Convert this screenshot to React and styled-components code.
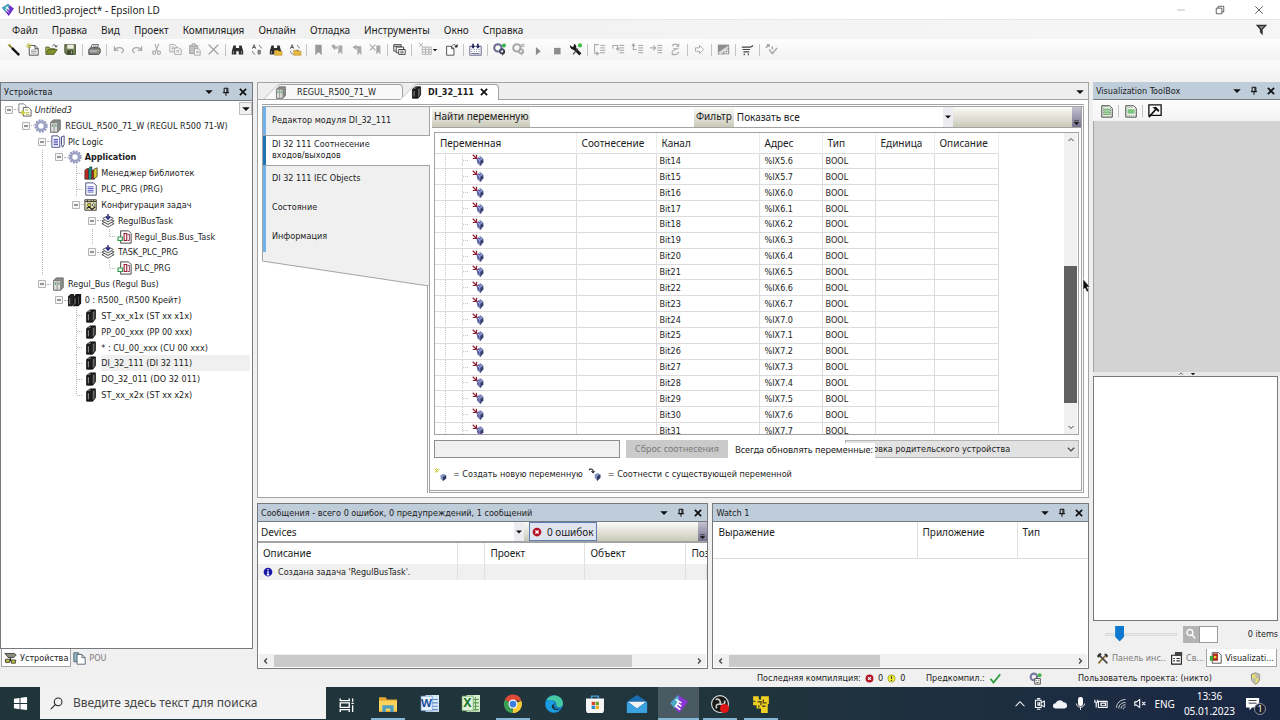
import React from 'react'
import styled, { createGlobalStyle, css } from 'styled-components'

const fonts = {
  ui: '"Noto Sans", "Open Sans", sans-serif',
  small: '"DejaVu Sans Condensed", "DejaVu Sans", sans-serif',
}

const colors = {
  chrome: '#f0f0f0',
  header: '#bfccda',
  border: '#a3a3a3',
  dark: '#76797d',
  grid: '#dcdcdc',
  text: '#1c1c1c',
  muted: '#7d7d7d',
  thumb: '#cacaca',
}

const GlobalStyle = createGlobalStyle`
  * {
    box-sizing: border-box;
  }

  body {
    margin: 0;
    background: ${colors.chrome};
    color: ${colors.text};
    font-family: ${fonts.ui};
    font-size: 10px;
    line-height: 14px;
  }

  button, input, select {
    margin: 0;
    padding: 0;
    border: 0;
    border-radius: 0;
    background: none;
    color: inherit;
    font: inherit;
  }

  ul {
    list-style: none;
    margin: 0;
    padding: 0;
  }

  a {
    color: inherit;
    text-decoration: none;
  }
`

/* ---------- icons ---------- */

const Svg = styled.svg`
  display: block;
  flex: none;
  width: ${({ $size }) => $size || 14}px;
  height: ${({ $size }) => $size || 14}px;
  overflow: visible;
`

const G = '#a9a9a9'

const lines = (x, w, ys, color) =>
  ys.map(y => <path key={y} d={`M${x} ${y}h${w}`} stroke={color} />)

const cabinet = (
  <g>
    <path d="M3 4l3-3h8v11l-3 3H3z" fill="#8c8f8c" stroke="#666" />
    <path d="M3 4h8v11H3z" fill="#dde0dd" stroke="#777" />
    <path d="M7 4v11" stroke="#888" />
    <path d="M5 6v3M9 6v3" stroke="#3f8f52" />
  </g>
)

const moduleShape = (
  <g>
    <path d="M3 4l4-3h6v10l-3 4H3z" fill="#1b1b1b" stroke="#111" />
    <path d="M10 4v10l2-3V2z" fill="#6d6d6d" />
    <path d="M5 6v7" stroke="#a8a8a8" />
    <path d="M5 3l3-1" stroke="#999" />
  </g>
)

const gear = (
  <g>
    <circle cx="8" cy="8" r="6.6" fill="none" stroke="#8f94b8" strokeWidth="2" strokeDasharray="2.2 1.25" />
    <circle cx="8" cy="8" r="4.6" fill="none" stroke="#9ba0c6" strokeWidth="3" />
  </g>
)

const binoculars = (
  <g fill="#2d2d2d">
    <path d="M3 3h3v3h4V3h3l2 7v4H9.500v-4h-3v4H1v-4z" />
    <path d="M3 10v3M13 10v3" stroke="#aaa" />
  </g>
)

const refs = (
  <g fill="none" stroke="#3d3d3d">
    <path d="M3 7l2-5 2 5M3.500 5.500h3" />
    <path d="M11 3l2 1 1 3M3 10l1 3 3 1" strokeDasharray="2 1" />
    <path d="M10 9h2.500v4.500H10zM10 11h3" />
  </g>
)

const folder = <path d="M7 9h4l1 1h4v5H7z" fill="#e8b83c" stroke="#a97c16" strokeWidth=".6" />

const target = (
  <g>
    <path d="M3 15V1h9l3 3v11z" fill="#fff" stroke="#333" />
    <path d="M0 8h5v4H0z" fill="#fff" stroke="#2e9e4c" strokeWidth="1.300" />
    <path d="M7 4h3v8H7z" fill="#fff" stroke="#a11c33" strokeWidth="1.300" />
    <path d="M11 5h2v7h-2" fill="none" stroke="#7c2a4a" />
  </g>
)

const steps = <g stroke={G} strokeWidth="1.300">{[3, 6, 9, 12].map(y => <path key={y} d={`M9 ${y}h6`} />)}</g>

const icons = {
  logo: (
    <g>
      <path d="M0 5l8-5 8 6-7 10-4-5z" fill="#6b35c9" />
      <path d="M0 5l8-5 2 3-5 8z" fill="#39a9b8" />
      <path d="M5 4l4 2M8 3L5 8l4 3M7 6l3 2" fill="none" stroke="#fff" strokeWidth="1.300" />
    </g>
  ),
  wand: (
    <g>
      <path d="M6 6l9 9" stroke="#151515" strokeWidth="3" />
      <path d="M2 2l4 4" stroke="#77751f" strokeWidth="2" />
      <path d="M1 4l1-1M4 1v1M1 1l1 1" stroke="#d2c63b" />
    </g>
  ),
  newFile: (
    <g>
      <path d="M4 3h7l4 4v8H4z" fill="#fff" stroke="#333" />
      <path d="M11 3v4h4" fill="none" stroke="#333" />
      {lines(6, 7, [8.5, 10.5, 12.5], '#8b8b8b')}
      <path d="M3.500 0v7M0 3.500h7M1 1l5 5M6 1L1 6" stroke="#bdb93a" />
    </g>
  ),
  open: (
    <g>
      <path d="M1 13V5h4l1 2h6v2" fill="#a4b05a" stroke="#4e5a20" />
      <path d="M1 14l3-6h11l-4 6z" fill="#7f8f2e" stroke="#4e5a20" />
      <path d="M9 4c2-3 4-2 5 1m0 0l1-2m-1 2l-2-1" fill="none" stroke="#333" />
    </g>
  ),
  save: (
    <g>
      <path d="M1 2h13v12H3l-2-2z" fill="#76845a" stroke="#333f1c" />
      <path d="M4 2h8v5H4z" fill="#eceddf" />
      <path d="M4 9h7v5H4z" fill="#3d4427" />
      <path d="M9 10v3" stroke="#ddd" />
    </g>
  ),
  print: (
    <g>
      <path d="M5 2h8l-2 5H3z" fill="#fff" stroke="#444" />
      <path d="M6 4h5M5.500 5.500h5" stroke="#777" />
      <path d="M1 8l2-2h11l1 2v4l-2 2H1z" fill="#8d8d8d" stroke="#333" />
      <path d="M2 10h9" stroke="#ddd" />
      <circle cx="13" cy="9" r=".8" fill="#d6d23b" />
    </g>
  ),
  undo: <path d="M3 4v5h5M3 9c2-4 10-5 11 0 0 2-1 3-3 3" fill="none" stroke={G} strokeWidth="1.400" />,
  redo: <path d="M13 4v5H8M13 9C11 5 3 4 2 9c0 2 1 3 3 3" fill="none" stroke={G} strokeWidth="1.400" />,
  cut: (
    <g fill="none" stroke={G} strokeWidth="1.300">
      <path d="M6 1l3 9M11 1L7 10" />
      <circle cx="5" cy="12" r="2" />
      <circle cx="11" cy="12" r="2" />
    </g>
  ),
  copy: (
    <g fill="#fff" stroke="#999">
      <path d="M1 2h6l2 2v7H1z" />
      <path d="M3 5h4M3 7h4M3 9h2" />
      <path d="M7 6h5l3 2v6H7z" />
      <path d="M9 9h4M9 11h4" />
    </g>
  ),
  paste: (
    <g stroke="#999">
      <path d="M2 3h10v10H2z" fill="#c3c3c3" />
      <path d="M5 1h4v3H5z" fill="#ddd" />
      <path d="M8 7h5l2 2v6H8z" fill="#fff" />
      <path d="M10 10h4M10 12h4" />
    </g>
  ),
  remove: <path d="M2 2l12 12M14 2L2 14" stroke="#989898" strokeWidth="1.600" />,
  find: binoculars,
  replace: refs,
  findIn: <g>{binoculars}{folder}</g>,
  replaceIn: <g>{refs}{folder}</g>,
  bookmark: <path d="M4 2h8v13l-4-4-4 4z" fill="#9a9a9a" />,
  bookmarkNext: <g fill={G}><path d="M9 3h5v11l-2.500-3L9 14z" /><path d="M1 2l4 0v2h3v3H5v2L1 5z" /></g>,
  bookmarkPrev: <g fill={G}><path d="M9 4h5v11l-2.500-3L9 15z" /><path d="M8 2L3 5l5 4V6h3V4H8z" /></g>,
  bookmarkClear: <g fill={G}><path d="M9 3h5v11l-2.500-3L9 14z" /><path d="M1 2l7 7M8 2L1 9" stroke={G} strokeWidth="1.500" /></g>,
  windows: (
    <g fill="#fff" stroke="#444" strokeWidth="1.200">
      <path d="M1 2h9v8H1z" />
      <path d="M1 4h9" />
      <path d="M4 5h9v7H4z" />
      <path d="M7 8h8v6H7z" />
      <path d="M9 10h4M9 12h4" strokeWidth="1" />
    </g>
  ),
  gridNew: (
    <g fill="none" stroke={G}>
      <path d="M4 5h11v9H4zM4 8h11M4 11h11M8 5v9M12 5v9" />
      <path d="M0 0l5 5M5 0L0 5" />
    </g>
  ),
  share: (
    <g fill="#fff" stroke="#333">
      <path d="M2 4h6l3 3v8H2z" />
      <path d="M8 4v3h3M9 3c2-2 4-1 5 1" fill="none" />
      <path d="M15 2v3h-3z" fill="#222" />
    </g>
  ),
  build: (
    <g>
      <path d="M1 4h14v11H1z" fill="#fff" stroke="#45456f" />
      <path d="M3 8h1m2 0h1m2 0h1m2 0h1M3 10.500h1m2 0h1m2 0h1m2 0h1M3 13h10" stroke="#45456f" />
      <path d="M5 1v4M11 1v4" stroke="#22225a" strokeWidth="2" />
      <path d="M2.500 4h5L5 7zM8.500 4h5L11 7z" fill="#22225a" />
    </g>
  ),
  login: (
    <g>
      <circle cx="6" cy="6" r="4.500" fill="none" stroke="#6a6f92" strokeWidth="2.600" />
      <circle cx="11" cy="10" r="2.500" fill="none" stroke="#444866" strokeWidth="2" />
      <circle cx="13.500" cy="3" r="2.500" fill="#36b44a" />
      <path d="M14 9v3l-3 3" stroke="#333" strokeWidth="1.500" fill="none" />
    </g>
  ),
  logout: (
    <g fill="none" stroke={G}>
      <circle cx="6" cy="6" r="4.500" strokeWidth="2.600" />
      <circle cx="11" cy="10" r="2.500" strokeWidth="2" />
      <path d="M11 1l4 4M15 1l-4 4M14 9v3l-3 3" strokeWidth="1.300" />
    </g>
  ),
  play: <path d="M6 5l6 5-6 5z" fill="#8b8b8b" />,
  stop: <path d="M5 6h8v8H5z" fill="#8b8b8b" />,
  wrench: (
    <g>
      <path d="M6 6l8 8" stroke="#1d1d1d" strokeWidth="3.500" />
      <path d="M2 3l2 2 2-1V1C9 2 10 5 8 8 5 9 1 7 1 3z" fill="#1d1d1d" />
      <path d="M11 7l-6 7" stroke="#444" strokeWidth="1.500" />
      <circle cx="13.500" cy="3" r="2.600" fill="#3fbf45" />
    </g>
  ),
  stepOver: <g>{steps}<path d="M7 2H2v11h4M4 11l3 2-3 2" fill="none" stroke={G} strokeWidth="1.300" /></g>,
  stepInto: <g>{steps}<path d="M1 7V3h6v5M5 6l2 3 2-3" fill="none" stroke={G} strokeWidth="1.300" /></g>,
  stepOut: <g>{steps}<path d="M2 8h5M3 8V2M1 4l2-3 2 3" fill="none" stroke={G} strokeWidth="1.300" /></g>,
  runTo: <g>{steps}<path d="M0 6h6M4 3l3 3-3 3" fill="none" stroke={G} strokeWidth="1.300" /></g>,
  cycle: <path d="M4 4c2-4 6-3 8 0M9 4h3V1M12 6L4 10M4 10v4h3M12 11c-1 3-4 4-8 3M5 7h6" fill="none" stroke={G} strokeWidth="1.300" />,
  arrow: <path d="M3 6h5V3l5 5-5 5v-3H3z" fill="#fff" stroke="#999" />,
  wave: (
    <g>
      <path d="M1 2h14v12H1z" fill="#8c8c8c" />
      <path d="M1 12L14 3v3L5 14z" fill="#d9d9d9" />
      <path d="M9 9h5M9 12h5M10 8v6M13 8v6" stroke="#eee" />
    </g>
  ),
  trace: <path d="M1 5h11M2 8h9M3 11h7M12 5l3-2M4 13v2M9 13v2" fill="none" stroke="#444" strokeWidth="1.400" />,
  check2: <path d="M1 6l4-4M2 2h3v3M5 8l4 5 6-7M9 4v4" fill="none" stroke={G} strokeWidth="1.800" />,
  funnel: <g><path d="M1 2h14L9.500 8v7L6 11.500V8z" fill="#333" /><path d="M5 4h6L8 7z" fill="#999" /></g>,
  project: (
    <g>
      <path d="M1 1h6l2 2v8H1z" fill="#fff" stroke="#777" />
      <path d="M6 5h6l3 3v7H6z" fill="#fff" stroke="#555" />
      <path d="M4 8l5 3-5 3z" fill="#d4d234" />
      <path d="M8 8h4M9 11h4M9 13h4" stroke="#b0b02f" />
    </g>
  ),
  cabinet,
  module: moduleShape,
  gear,
  logic: (
    <g>
      <path d="M1 1h7l2 2v11H1z" fill="#fff" stroke="#39397f" />
      {lines(3, 5, [5, 7, 9, 11], '#2b2bb0')}
      <path d="M12 2v9l1 3 2-3V1z" fill="#fff" stroke="#39397f" />
    </g>
  ),
  library: (
    <g stroke="#2a2a2a" strokeWidth=".8">
      <path d="M1 5l2-2h2v12H1z" fill="#c92a1c" />
      <path d="M5 3l2-2h2v14H5z" fill="#1f8f84" />
      <path d="M9 5h3v10H9z" fill="#e2241a" />
      <path d="M11 4l4-2v10l-4 3z" fill="#d8cf2c" />
    </g>
  ),
  pou: (
    <g>
      <path d="M2 1h9l3 3v11H2z" fill="#fff" stroke="#333a66" />
      {lines(4, 7, [5.5, 7.5, 9.5, 11.5], '#4343c4')}
    </g>
  ),
  tasks: (
    <g>
      <path d="M1 2h13v12H1z" fill="#e8e4b0" stroke="#333" />
      <path d="M1 4h13M4 2v3M8 2v3M11 2v3" stroke="#333" />
      <circle cx="6" cy="8" r="2" fill="#d7cf2e" stroke="#555" />
      <circle cx="11" cy="8" r="1.500" fill="#fff" stroke="#555" />
      <path d="M3 12l3-2 3 3 4-3" fill="none" stroke="#222" strokeWidth="1.400" />
    </g>
  ),
  task: (
    <g>
      <path d="M1 11l7-3 7 3-7 4z" fill="#fff" stroke="#444" />
      <path d="M1 8l7-3 7 3-7 4z" fill="#e4e4ea" stroke="#444" />
      <path d="M2 5l6-3 6 3-6 4z" fill="#f7f7ff" stroke="#555" />
      <path d="M8 0v5M5.500 3L8 6l2.500-3" fill="none" stroke="#27277e" strokeWidth="1.500" />
    </g>
  ),
  target,
  rack: (
    <g>
      <path d="M0 4l3-3h4v11l-2 3H0z" fill="#222" />
      <path d="M6 5l3-4h6v11l-3 3H6z" fill="#151515" />
      <path d="M2 6v7M8 6v7" stroke="#999" />
      <path d="M12 4v9" stroke="#555" />
    </g>
  ),
  unmapped: (
    <g>
      <path d="M6 6l5-3 4 3v5l-4 5-4-4z" fill="#6468a8" />
      <path d="M8 7l3 2v5M11 9l3-3M9 4l4 3" stroke="#c5c8e8" fill="none" />
      <path d="M11 9l4-2v4l-4 5z" fill="#393c70" />
      <path d="M1 1l5 5M6 1v5H1" stroke="#8f1d2b" fill="none" strokeWidth="1.600" />
    </g>
  ),
  newVar: (
    <g>
      <path d="M8 9l4-2 3 2v4l-4 3-3-3z" fill="#7e93c4" />
      <path d="M11 11l4-2v4l-4 3z" fill="#32375f" />
      <path d="M1 1l4 4M5 1L1 5M3 0v6M7 1l-2 3" stroke="#c8c63b" />
    </g>
  ),
  mapVar: (
    <g>
      <path d="M7 8l4-2 3 2v4l-4 4-3-4z" fill="#7e93c4" />
      <path d="M10 10l4-2v4l-4 4z" fill="#32375f" />
      <path d="M0 3c1-3 4-2 5 0v3M3 4l2 2 2-2" stroke="#222" fill="none" strokeWidth="1.300" />
    </g>
  ),
  docGreen: (
    <g>
      <path d="M2 2h9l3 3v10H2z" fill="#eef3ec" stroke="#333" />
      <path d="M4 5h8v8H4z" fill="#cfe6cd" />
      {lines(4, 8, [6, 8, 10, 12], '#64a864')}
      <path d="M4 3h6M4 5v8M12 5v8" stroke="#7a8f78" strokeDasharray="1 1" />
    </g>
  ),
  docAdd: (
    <g>
      <path d="M2 2h9l3 3v10H2z" fill="#eef3ec" stroke="#333" />
      <path d="M4 6h8v5H4z" fill="#7cc47c" />
      <path d="M4 4h5M4 13h8" stroke="#8b9a8b" strokeDasharray="1 1" />
    </g>
  ),
  hammer: (
    <g>
      <path d="M1 1h14v12H1z" fill="#fff" stroke="#111" strokeWidth="1.500" />
      <path d="M1 15L9 6" stroke="#111" strokeWidth="2" />
      <path d="M5 4l4-1 4 4-1 2-4-3z" fill="#111" />
    </g>
  ),
  info: <g><circle cx="8" cy="8" r="7" fill="#1717a8" /><path d="M8 3v2M8 6.500v6M6 12.500h4" stroke="#fff" strokeWidth="2" /></g>,
  error: <g><circle cx="8" cy="8" r="7" fill="#b51426" /><path d="M5.500 5.500l5 5M10.500 5.500l-5 5" stroke="#fff" strokeWidth="2.200" /></g>,
  warn: <g><circle cx="8" cy="8" r="6.500" fill="#f1ee3a" stroke="#777a1c" /><path d="M8 4v5M8 10.500v2" stroke="#333" strokeWidth="2" /></g>,
  ok: <path d="M2 9l4 5 9-11" fill="none" stroke="#2f9b3e" strokeWidth="2.500" />,
  devices: (
    <g>
      <path d="M1 3h12l2 2-3 3H5z" fill="#8d8d7d" stroke="#333" />
      <path d="M1 12h14M8 8v4" stroke="#333" strokeWidth="1.500" />
      <path d="M2 10h5v4H2zM9 11h5v4H9z" fill="#c4c23b" stroke="#333" />
    </g>
  ),
  pages: (
    <g stroke="#456">
      <path d="M1 1h6v11H1z" fill="#8fb8c0" />
      <path d="M5 3h6l4 4v8H5z" fill="#fff" />
      <path d="M11 3v4h4" fill="none" />
    </g>
  ),
  tools: (
    <g>
      <path d="M3 14L12 4" stroke="#8a6a2a" strokeWidth="2" />
      <path d="M3 3l11 11" stroke="#444" strokeWidth="2" />
      <path d="M1 5l4-4 2 2-4 4zM10 2h3l2 3-2 2z" fill="#333" />
    </g>
  ),
  props: (
    <g>
      <path d="M2 4h12v11H2z" fill="#fff" stroke="#222" strokeWidth="1.400" />
      <path d="M6 0h9v5H6z" fill="#444" />
      <path d="M4 8h2M4 11h2M8 8h4M8 11h4" stroke="#222" strokeWidth="1.500" />
    </g>
  ),
  visu: (
    <g>
      <path d="M4 2h8l3 3v10H4z" fill="#fff" stroke="#333" />
      <path d="M1 6h5v6H1z" fill="#3aa640" />
      <path d="M5 3h6v9H5z" fill="#b02318" />
      <path d="M6 6h3v3H6z" fill="#e3d935" />
    </g>
  ),
  online: (
    <g>
      <circle cx="6" cy="6" r="4" fill="none" stroke="#777a9c" strokeWidth="2.500" />
      <circle cx="13" cy="4" r="2.500" fill="#43b549" />
      <path d="M7 8h7v7H7z" fill="#eee" stroke="#444" />
      <path d="M9 10v1M12 10v1M9 13h3" stroke="#444" />
    </g>
  ),
  shield: (
    <g>
      <path d="M8 1l5 2v5c0 4-3 6-5 7-2-1-5-3-5-7V3z" fill="#e8dc7a" stroke="#666" />
      <path d="M8 1l5 2v5H8zM3 8h5v7c-2-1-5-3-5-7z" fill="#b9bcae" />
    </g>
  ),
  magnifier: <g fill="none" stroke="#fff" strokeWidth="1.800"><circle cx="6.500" cy="6" r="4" /><path d="M9.500 9l4 5" /></g>,
  down: <path d="M2 5h12l-6 6z" fill="#111" />,
  pin: <path d="M5 2h6v7H5zM9.500 2v7M3 9h10M8 9v5" fill="none" stroke="#111" strokeWidth="1.600" />,
  close: <path d="M3 3l10 10M13 3L3 13" stroke="#111" strokeWidth="2.800" />,
  overflow: <path d="M3 4h10M3 8h10l-5 5z" fill="#111" stroke="#111" strokeWidth="1.500" />,
  up: <path d="M3 10l5-5 5 5" fill="none" stroke="#444" strokeWidth="2" />,
  downThin: <path d="M3 6l5 5 5-5" fill="none" stroke="#444" strokeWidth="2" />,
  left: <path d="M10 3L5 8l5 5" fill="none" stroke="#444" strokeWidth="2.600" />,
  right: <path d="M6 3l5 5-5 5" fill="none" stroke="#444" strokeWidth="2.600" />,
  minimize: <path d="M2 8h12" stroke="#999" />,
  maximize: <path d="M2 5h9v9H2zM5 5V2h9v9h-3" fill="none" stroke="#444" strokeWidth="1.300" />,
  exit: <path d="M2 2l12 12M14 2L2 14" stroke="#444" strokeWidth="1.300" />,
  minus: <g><path d="M1 1h14v14H1z" fill="#f6f6f6" stroke="#b4b4b4" strokeWidth="2" /><path d="M4 8h8" stroke="#333" strokeWidth="2" /></g>,
}

/* taskbar pictures */
const apps = {
  start: <g fill="#fff"><path d="M1 3l6-1v5.500H1zM8 1.900L15 1v6.500H8zM1 8.500h6V14l-6-1zM8 8.500h7V15l-7-1z" /></g>,
  search: <g fill="none" stroke="#222" strokeWidth="1.300"><circle cx="10" cy="6" r="4.700" /><path d="M6.500 9.500L1 15" /></g>,
  taskView: <path d="M2 3v2h8V3M2 7h8v4H2zM2 15v-2h8v2M13 3v3M13 9v6M12 7.500h2" fill="none" stroke="#fff" strokeWidth="1.200" />,
  explorer: (
    <g>
      <path d="M0 2h6l1 2h9v11H0z" fill="#e2a832" />
      <path d="M0 5h16v9H0z" fill="#fbd35c" />
      <path d="M3 15V9h10v6h-3v-3H6v3z" fill="#4c9fc4" />
    </g>
  ),
  word: (
    <g>
      <path d="M4 0h12v15H4z" fill="#d9e8f7" />
      <path d="M10 4h5M10 7h5M10 10h5M8 13h7" stroke="#5b87bf" />
      <path d="M0 1h10v13H0z" fill="#eaf2fb" stroke="#5b8ccc" strokeWidth=".6" />
      <text x="0" y="11" fontSize="10" fontWeight="700" fill="#1d4f9c">W</text>
    </g>
  ),
  excel: (
    <g>
      <path d="M4 0h12v15H4z" fill="#d6ebd0" />
      <path d="M9 4h6M9 7h6M9 10h6M8 13h7M12 2v12" stroke="#5aa052" />
      <path d="M0 1h10v13H0z" fill="#e2f2dc" stroke="#5aa052" strokeWidth=".6" />
      <text x="1" y="11" fontSize="11" fontWeight="700" fill="#217a32">X</text>
    </g>
  ),
  chrome: (
    <g>
      <path d="M8 8L.6 4.500A8 8 0 0 1 15.500 5H8z" fill="#df4a38" />
      <path d="M8 8L15.400 5A8 8 0 0 1 7.500 16z" fill="#f6ca38" />
      <path d="M8 8L7.500 16A8 8 0 0 1 .8 4.200z" fill="#3a9f52" />
      <circle cx="8" cy="8" r="4" fill="#fff" />
      <circle cx="8" cy="8" r="3" fill="#3c7de0" />
    </g>
  ),
  edge: (
    <g>
      <circle cx="8" cy="8" r="8" fill="#1779c4" />
      <path d="M1 5C4-2 16-1 16 8c0 3-5 4-6 1 1-5-7-5-9-4z" fill="#45c9a0" />
      <path d="M1 6c5-3 8-1 7 2-3 2-1 6 5 6C6 18-1 13 1 6z" fill="#1b9de0" />
      <path d="M8 8c-1 4 3 6 7 4-2 2-9 2-9-2 0-1 1-2 2-2z" fill="#20343a" />
    </g>
  ),
  store: (
    <g>
      <path d="M5 3V1h6v2" fill="none" stroke="#4ba3dc" strokeWidth="1.300" />
      <path d="M0 3h16v11l-1 2H1l-1-2z" fill="#f5f5f5" />
      <path d="M5 6h3v3H5z" fill="#d9482b" />
      <path d="M8.500 6h3v3h-3z" fill="#6ea52c" />
      <path d="M5 9.500h3v3H5z" fill="#2c8fd6" />
      <path d="M8.500 9.500h3v3h-3z" fill="#e8b024" />
    </g>
  ),
  mail: (
    <g>
      <path d="M-1 6l9-6 9 6v9H-1z" fill="#1c6cb0" />
      <path d="M0 6h16l-8 6z" fill="#f2f2f2" />
      <path d="M-1 6l9 6 9-6v10H-1z" fill="#3ba2e2" />
    </g>
  ),
  epsilon: (
    <g>
      <path d="M8 0l9 6-8 10-8-9z" fill="#8a35d6" />
      <path d="M8 0L1 7l4 5 4-8z" fill="#4aa9c4" />
      <path d="M6 4l5 3M9 5L6 10l4 3M8 8l3 2" fill="none" stroke="#fff" strokeWidth="1.500" />
    </g>
  ),
  obs: (
    <g>
      <circle cx="8" cy="8" r="7.500" fill="#161616" stroke="#ddd" />
      <path d="M4 4c3-1 5 1 4 4M12 5c1 3-1 4-4 3M5 12c-1-3 0-4 3-4" fill="none" stroke="#ccc" strokeWidth="1.500" />
      <circle cx="12" cy="12" r="4" fill="#e01616" />
    </g>
  ),
  yellow: (
    <g>
      <path d="M1 1h5v3h2V1h7v7h-1v8H8v-4H4V9H1V6h2V5H1z" fill="#efd022" />
      <path d="M5 6h3v3M10 4v3h3M9 10h3M6 9v2" stroke="#4f4710" fill="none" strokeWidth="1.200" />
    </g>
  ),
  chevron: <path d="M2 11l6-6 6 6" fill="none" stroke="#fff" strokeWidth="1.400" />,
  meet: <path d="M3 4h7v9H3zM10 7l4-2v7l-4-2M5 2h4M5 15h4M6 7h2v3H6z" fill="none" stroke="#fff" strokeWidth="1.300" />,
  cloud: <path d="M3 13a3 3 0 0 1 0-6 5 5 0 0 1 9-1 3.500 3.500 0 0 1 1 7z" fill="#f2f5f8" />,
  mic: <g><rect x="5" y="0" width="6" height="11" rx="2.500" fill="#fff" /><path d="M3 8c0 6 10 6 10 0M8 12v4" fill="none" stroke="#fff" /></g>,
  battery: <path d="M5 5h10v7H5zM1 3v3h3V3M2.500 6v6M8 7h5v3H8z" fill="none" stroke="#fff" strokeWidth="1.300" />,
  wifi: <path d="M2 13C2 7 7 2 14 2M5 14c0-5 4-8 9-8M8 14c0-3 3-5 6-5M11 15c0-2 1-3 3-3" fill="none" stroke="#ddd" strokeWidth="1.200" />,
  mute: <path d="M1 6h2l4-3v10l-4-3H1zM10 6l4 4M14 6l-4 4" fill="none" stroke="#fff" strokeWidth="1.300" />,
  note: <g><path d="M0 1h15v11H7l-3 3v-3H0z" fill="#fff" /><path d="M3 4h9M3 7h9" stroke="#223" /></g>,
}

const Icon = ({ name, size }) => (
  <Svg viewBox="0 0 16 16" $size={size} aria-hidden="true">
    {icons[name] || apps[name]}
  </Svg>
)

/* ---------- window frame ---------- */

const Page = styled.div`
  display: flex;
  flex-direction: column;
  height: 100vh;
  overflow: hidden;
`

const TitleBar = styled.header`
  display: flex;
  align-items: center;
  gap: 4px;
  height: 19px;
  padding: 0 16px 0 2px;
  background: #fff;
`

const WindowTitle = styled.h1`
  flex: 1;
  margin: 0;
  font-size: 10px;
  font-weight: 400;
`

const WindowButtons = styled.div`
  display: flex;
  gap: 29px;
`

const MenuBar = styled.nav`
  display: flex;
  align-items: center;
  gap: 14px;
  height: 20px;
  padding: 0 12px;
  border-top: 1px solid #e6e6e6;
  background: linear-gradient(90deg, #f0f0f0, #f6f6f6);

  a:last-child {
    margin-left: auto;
  }
`

const ToolBar = styled.div`
  display: flex;
  align-items: center;
  height: 21px;
  padding-left: 4px;
  background: linear-gradient(#fdfdfd, #f3f3f3);
`

const ToolButton = styled.button`
  display: flex;
  align-items: center;
  justify-content: center;
  width: ${({ $wide }) => ($wide ? 28 : 19)}px;
  height: 20px;
`

const ToolSep = styled.span`
  width: 1px;
  height: 12px;
  margin: 0 2px;
  background: #c4c4c4;
`

const EmptyBar = styled.div`
  height: 22px;
  background: linear-gradient(#fbfbfb, #f1f1f1);
`

const Workspace = styled.main`
  flex: 1;
  display: grid;
  grid-template-columns: 253px minmax(0, 1fr) 187px;
  column-gap: 4px;
  min-height: 0;
`

const Column = styled.div`
  display: flex;
  flex-direction: column;
  min-width: 0;
  min-height: 0;
`

/* ---------- docked panels ---------- */

const Panel = styled.section`
  display: flex;
  flex-direction: column;
  flex: 1;
  min-width: 0;
  min-height: 0;
  border: 1px solid ${colors.dark};
  background: #fff;
`

const PanelHeader = styled.header`
  display: flex;
  align-items: center;
  gap: 7px;
  flex: none;
  height: 18px;
  padding: 0 4px 0 3px;
  border-bottom: 1px solid ${colors.dark};
  background: ${colors.header};
  font-family: ${fonts.small};
  font-size: 9px;

  h2 {
    flex: 1;
    margin: 0;
    font: inherit;
    white-space: nowrap;
  }
`

const IconButton = styled.button`
  display: flex;
`

const PanelTop = ({ title }) => (
  <PanelHeader>
    <h2>{title}</h2>
    <IconButton aria-label="Меню"><Icon name="down" size={10} /></IconButton>
    <IconButton aria-label="Закрепить"><Icon name="pin" size={10} /></IconButton>
    <IconButton aria-label="Закрыть"><Icon name="close" size={10} /></IconButton>
  </PanelHeader>
)

const DockTabs = styled.nav`
  display: flex;
  flex: none;
  height: 20px;
  padding: 0 0 2px 1px;
  font-family: ${fonts.small};
  font-size: 9px;
`

const DockTab = styled.a`
  display: flex;
  align-items: center;
  gap: 3px;
  padding: 0 2px;
  color: ${({ $active }) => ($active ? colors.text : colors.muted)};
  white-space: nowrap;
  ${({ $active }) =>
    $active &&
    css`
      border: 1px solid ${colors.border};
      border-top: 0;
      background: #fff;
    `}
`

/* ---------- device tree ---------- */

const TreeBody = styled.div`
  display: flex;
  flex: 1;
  align-items: flex-start;
  padding: 1px 0;
`

const TreeList = styled.ul`
  display: grid;
  grid-auto-rows: 1fr;
  flex: 1;
  height: 301px;
  min-width: 0;
  margin-right: -13px;
  font-family: ${fonts.small};
  font-size: 9px;
`

const TreeRow = styled.li`
  display: flex;
  align-items: center;
  min-height: 0;
`

const Guide = styled.span`
  display: flex;
  align-items: center;
  align-self: stretch;
  flex: none;
  width: calc(100px / 6);
  padding-left: 4px;
  background-image: ${({ $line }) =>
    $line ? 'repeating-linear-gradient(#b5b5b5 0 1px, transparent 1px 2px)' : 'none'};
  background-size: 1px ${({ $line }) => ($line === 'half' ? '50%' : '100%')};
  background-position: 8px 0;
  background-repeat: no-repeat;

  &::after {
    content: '';
    width: 5px;
    margin-left: ${({ $leaf }) => ($leaf ? 5 : 1)}px;
    border-top: ${({ $tick }) => ($tick ? '1px dotted #b5b5b5' : '0')};
  }
`

const TreeLabel = styled.a`
  display: flex;
  align-items: center;
  flex: ${({ $selected }) => ($selected ? 1 : 'none')};
  align-self: stretch;
  margin-left: 3px;
  margin-right: 2px;
  background: ${({ $selected }) => ($selected ? '#f0f0f0' : 'none')};
  font-weight: ${({ $bold }) => ($bold ? 700 : 400)};
  font-style: ${({ $italic }) => ($italic ? 'italic' : 'normal')};
  white-space: nowrap;
`

const DropButton = styled.button`
  display: flex;
  align-items: center;
  justify-content: center;
  flex: none;
  width: 13px;
  height: 13px;
  border: 1px solid #bdbdbd;
  background: #f0f0f0;
`

const tree = [
  { level: 0, open: true, icons: ['project'], label: 'Untitled3', italic: true },
  { level: 1, open: true, icons: ['gear', 'cabinet'], label: 'REGUL_R500_71_W (REGUL R500 71-W)' },
  { level: 2, open: true, icons: ['logic'], label: 'Plc Logic' },
  { level: 3, open: true, icons: ['gear'], label: 'Application', bold: true, through: [2] },
  { level: 4, icons: ['library'], label: 'Менеджер библиотек', through: [2] },
  { level: 4, icons: ['pou'], label: 'PLC_PRG (PRG)', through: [2] },
  { level: 4, open: true, icons: ['tasks'], label: 'Конфигурация задач', through: [2] },
  { level: 5, open: true, icons: ['task'], label: 'RegulBusTask', through: [2] },
  { level: 6, last: true, icons: ['target'], label: 'Regul_Bus.Bus_Task', through: [2, 5] },
  { level: 5, open: true, icons: ['task'], label: 'TASK_PLC_PRG', through: [2] },
  { level: 6, last: true, icons: ['target'], label: 'PLC_PRG', through: [2] },
  { level: 2, open: true, icons: ['cabinet'], label: 'Regul_Bus (Regul Bus)' },
  { level: 3, open: true, icons: ['rack'], label: '0 : R500_ (R500 Крейт)' },
  { level: 4, icons: ['module'], label: 'ST_xx_x1x (ST xx x1x)' },
  { level: 4, icons: ['module'], label: 'PP_00_xxx (PP 00 xxx)' },
  { level: 4, icons: ['module'], label: '* : CU_00_xxx (CU 00 xxx)' },
  { level: 4, icons: ['module'], label: 'DI_32_111 (DI 32 111)', selected: true },
  { level: 4, icons: ['module'], label: 'DO_32_011 (DO 32 011)' },
  { level: 4, last: true, icons: ['module'], label: 'ST_xx_x2x (ST xx x2x)' },
]

const DeviceTree = () => (
  <TreeBody>
    <TreeList>
      {tree.map((node, i) => (
        <TreeRow key={i}>
          {Array.from({ length: node.level }, (_, col) => (
            <Guide key={col} $line={(node.through || []).includes(col) && 'full'} />
          ))}
          <Guide $tick $leaf={!node.open} $line={!node.open && (node.last ? 'half' : 'full')}>
            {node.open && <Icon name="minus" size={8} />}
          </Guide>
          {node.icons.map(name => <Icon key={name} name={name} size={14} />)}
          <TreeLabel href="#" $bold={node.bold} $italic={node.italic} $selected={node.selected}>
            {node.label}
          </TreeLabel>
        </TreeRow>
      ))}
    </TreeList>
    <DropButton aria-label="Список"><Icon name="down" size={10} /></DropButton>
  </TreeBody>
)

/* ---------- editor ---------- */

const Editor = styled(Panel)`
  border-color: ${colors.border};
`

const EditorTabs = styled.nav`
  display: flex;
  flex: none;
  height: 17px;
  padding: 1px 3px 0 5px;
  border-bottom: 1px solid ${colors.border};
  background: #eee;
`

const EditorTab = styled.div`
  position: relative;
  z-index: 0;
  display: flex;
  align-items: center;
  gap: ${({ $active }) => ($active ? 5 : 10)}px;
  height: 16px;
  width: ${({ $active }) => ($active ? 100 : 136)}px;
  padding-left: ${({ $active }) => ($active ? 11 : 11)}px;
  font-family: ${fonts.small};
  font-size: 9px;
  font-weight: ${({ $active }) => ($active ? 700 : 400)};

  &::before,
  &::after {
    content: '';
    position: absolute;
    z-index: -1;
    top: 0;
    bottom: ${({ $active }) => ($active ? 0 : 1)}px;
    border-top: 1px solid ${colors.border};
    background: ${({ $active }) => ($active ? '#fff' : '#f8f8f8')};
  }

  &::before {
    left: 0;
    width: 50px;
    border-left: 1px solid ${colors.border};
    border-top-left-radius: 3px;
    transform: skewX(-45deg);
    transform-origin: bottom left;
  }

  &::after {
    left: 40px;
    right: ${({ $active }) => ($active ? 0 : -4)}px;
    border-right: 1px solid ${colors.border};
    border-top-right-radius: 4px;
  }
`

const TabsEnd = styled.div`
  display: flex;
  align-items: center;
  margin-left: auto;
`

const EditorBody = styled.div`
  flex: 1;
  display: grid;
  grid-template-columns: 168px minmax(0, 1fr);
  min-height: 0;
  margin: 4px 4px 4px;
  border-top: 3px double ${colors.border};
`

const SideNav = styled.nav`
  display: flex;
  flex-direction: column;
  border-left: 1px solid ${colors.border};
  font-family: ${fonts.small};
  font-size: 9px;
  line-height: 11px;
`

const SideTab = styled.a`
  display: flex;
  align-items: center;
  height: 29px;
  padding: 0 0 2px 6px;
  border-left: 3px solid ${({ $active }) => ($active ? '#1f74b4' : '#72b3ea')};
  border-right: 1px solid ${({ $active }) => ($active ? '#fff' : colors.border)};
  background: ${({ $active }) => ($active ? '#fff' : colors.chrome)};
  box-shadow: ${({ $active }) => ($active ? `0 -1px ${colors.border}, 0 1px ${colors.border}` : 'none')};
  z-index: ${({ $active }) => ($active ? 1 : 0)};

  span {
    width: 120px;
  }
`

const SideSlant = styled.div`
  height: 34px;
  padding-top: 9px;
  border-right: 1px solid ${colors.border};
  background: ${colors.chrome};

  &::before {
    content: '';
    display: block;
    height: 25px;
    margin-left: -1px;
    background: linear-gradient(
      to bottom left,
      ${colors.chrome} calc(50% - 1px),
      ${colors.border} 50%,
      #fff calc(50% + 1px)
    );
  }
`

const SideRest = styled.div`
  flex: 1;
  margin-left: -1px;
  border-right: 3px double ${colors.border};
  background: #fff;
`

const MappingPanel = styled.div`
  display: flex;
  flex-direction: column;
  min-width: 0;
  min-height: 0;
  border: 3px double ${colors.border};
  border-top: 0;
  border-left: 0;
`

const MappingFrame = styled.div`
  display: flex;
  flex: 1;
  flex-direction: column;
  min-height: 0;
  padding: 0 2px 0 4px;
`

const FindBar = styled.div`
  display: flex;
  flex: none;
  height: 21px;
  margin: 0 -2px 4px -2px;
  border-bottom: 1px solid ${colors.border};
`

const beige = 'linear-gradient(#fbfbf8, #c9c9b9)'

const BarLabel = styled.label`
  padding: 2px 2px 0 2px;
  background: ${beige};
  white-space: nowrap;
`

const BarInput = styled.input`
  flex: ${({ $grow }) => $grow || 1};
  min-width: 0;
`

const SelectBox = styled.div`
  display: flex;
  align-items: center;
  flex: ${({ $flex }) => $flex || 1};
  min-width: 0;
  background: #fff;

  select {
    appearance: none;
    flex: 1;
    align-self: stretch;
    min-width: 0;
    padding-left: 3px;
  }
`

const SelectArrow = styled.span`
  display: flex;
  align-items: center;
  align-self: stretch;
  padding: 0 1px;
  background: #ececf1;
`

const BarFill = styled.div`
  flex: ${({ $flex }) => $flex || 1};
  background: ${beige};
`

const OverflowButton = styled.button`
  display: flex;
  align-items: flex-end;
  justify-content: center;
  flex: none;
  width: 9px;
  padding-bottom: 1px;
  background: linear-gradient(#c3c1d0, #77738f);
`

const TableBox = styled.div`
  display: flex;
  flex: 1;
  justify-content: space-between;
  min-height: 0;
  overflow: hidden;
  border: 1px solid ${colors.border};
`

const MappingTable = styled.table`
  width: 563px;
  height: 305px;
  table-layout: fixed;
  border-collapse: collapse;
  font-family: ${fonts.small};
  font-size: 9px;
  line-height: 12px;

  th {
    height: 20px;
    padding: 0 0 0 5px;
    border-right: 1px solid #ececec;
    font-family: ${fonts.ui};
    font-size: 10px;
    font-weight: 400;
    text-align: left;
  }

  td {
    padding: 0 0 0 3px;
    border-top: 1px solid ${colors.grid};
    border-right: 1px solid ${colors.grid};
  }

  td:nth-child(4) {
    padding-left: 5px;
  }
`

const VarCell = styled.div`
  display: flex;
  align-items: center;
  height: 14px;
  margin-top: -1px;
  padding-left: 34px;
  background: repeating-linear-gradient(#c4c4c4 0 1px, transparent 1px 2px) 7px 0 / 1px 100% no-repeat,
    repeating-linear-gradient(#c4c4c4 0 1px, transparent 1px 2px) 24px 0 / 1px 100% no-repeat,
    repeating-linear-gradient(90deg, #c4c4c4 0 1px, transparent 1px 2px) 25px 7px / 6px 1px no-repeat;
`

const ScrollY = styled.div`
  display: flex;
  flex-direction: column;
  align-items: center;
  flex: none;
  width: 13px;
  margin-right: 1px;
  padding: 3px 0;
  background: #f0f0f0;
`

const ThumbY = styled.div`
  width: 100%;
  height: 137px;
  margin: auto 0 20px;
  background: #606060;
`

const OptionsRow = styled.div`
  display: flex;
  flex: none;
  height: 18px;
  margin: 5px 0 0;
`

const PathInput = styled.input`
  flex: 187;
  min-width: 0;
  border: 1px solid #8e8e8e;
  background: ${colors.chrome};
`

const ResetButton = styled.button`
  flex: none;
  width: 102px;
  margin: 0 7px 0 6px;
  background: #cacaca;
  color: #7b7b7b;
  font-size: 9px;
`

const UpdateLabel = styled.label`
  z-index: 1;
  flex: none;
  width: 140px;
  margin: 3px -30px 0 0;
  background: #fff;
  font-size: 9px;
  white-space: nowrap;
`

const ParentSelect = styled(SelectBox)`
  flex: 234;
  padding-right: 2px;
  border: 1px solid #b4b4b4;
  background: #e2e2e2;
  font-family: ${fonts.small};
  font-size: 9px;
`

const Legend = styled.div`
  display: flex;
  align-items: center;
  flex: none;
  gap: 6px;
  height: 32px;
  font-family: ${fonts.small};
  font-size: 9px;
`

const channels = Array.from({ length: 18 }, (_, i) => {
  const bit = i + 14
  return { name: `Bit${bit}`, address: `%IX${5 + Math.floor((bit - 8) / 8)}.${bit % 8}` }
})

const mappingColumns = [
  ['Переменная', 141],
  ['Соотнесение', 80],
  ['Канал', 103],
  ['Адрес', 63],
  ['Тип', 53],
  ['Единица', 59],
  ['Описание', 64],
]

const ModuleEditor = () => (
  <Editor>
    <EditorTabs>
      <EditorTab><Icon name="cabinet" size={13} />REGUL_R500_71_W</EditorTab>
      <EditorTab $active>
        <Icon name="module" size={13} />DI_32_111
        <IconButton aria-label="Закрыть вкладку"><Icon name="close" size={10} /></IconButton>
      </EditorTab>
      <TabsEnd><Icon name="down" size={10} /></TabsEnd>
    </EditorTabs>
    <EditorBody>
      <SideNav>
        <SideTab href="#">Редактор модуля DI_32_111</SideTab>
        <SideTab href="#" $active><span>DI 32 111 Соотнесение входов/выходов</span></SideTab>
        <SideTab href="#">DI 32 111 IEC Objects</SideTab>
        <SideTab href="#">Состояние</SideTab>
        <SideTab href="#">Информация</SideTab>
        <SideSlant />
        <SideRest />
      </SideNav>
      <MappingPanel>
        <MappingFrame>
          <FindBar>
            <BarLabel htmlFor="find">Найти переменную</BarLabel>
            <BarInput id="find" $grow={163} />
            <BarLabel htmlFor="filter">Фильтр</BarLabel>
            <SelectBox $flex={218}>
              <select id="filter"><option>Показать все</option></select>
              <SelectArrow><Icon name="down" size={8} /></SelectArrow>
            </SelectBox>
            <BarFill $flex={119} />
            <OverflowButton aria-label="Ещё"><Icon name="overflow" size={7} /></OverflowButton>
          </FindBar>
          <TableBox>
            <MappingTable>
              <colgroup>
                {mappingColumns.map(([name, width]) => <col key={name} width={width} />)}
              </colgroup>
              <thead>
                <tr>{mappingColumns.map(([name]) => <th key={name}>{name}</th>)}</tr>
              </thead>
              <tbody>
                {channels.map(({ name, address }) => (
                  <tr key={name}>
                    <td><VarCell><Icon name="unmapped" size={12} /></VarCell></td>
                    <td />
                    <td>{name}</td>
                    <td>{address}</td>
                    <td>BOOL</td>
                    <td />
                    <td />
                  </tr>
                ))}
              </tbody>
            </MappingTable>
            <ScrollY>
              <Icon name="up" size={8} />
              <ThumbY />
              <Icon name="downThin" size={8} />
            </ScrollY>
          </TableBox>
          <OptionsRow>
            <PathInput aria-label="Путь" disabled />
            <ResetButton disabled>Сброс соотнесения</ResetButton>
            <UpdateLabel htmlFor="update">Всегда обновлять переменные:</UpdateLabel>
            <ParentSelect>
              <select id="update"><option>Установка родительского устройства</option></select>
              <Icon name="downThin" size={10} />
            </ParentSelect>
          </OptionsRow>
          <Legend>
            <Icon name="newVar" size={13} /> = Создать новую переменную
            <Icon name="mapVar" size={13} /> = Соотнести с существующей переменной
          </Legend>
        </MappingFrame>
      </MappingPanel>
    </EditorBody>
  </Editor>
)

/* ---------- bottom panels ---------- */

const BottomRow = styled.div`
  display: grid;
  grid-template-columns: minmax(0, 452fr) minmax(0, 377fr);
  column-gap: 4px;
  flex: none;
  height: 166px;
  margin-top: 5px;
`

const MessageBar = styled.div`
  display: flex;
  flex: none;
  height: 21px;
  border-bottom: 2px solid ${colors.border};
`

const ErrorButton = styled.button`
  display: flex;
  align-items: center;
  gap: 5px;
  flex: none;
  width: 68px;
  padding-left: 2px;
  border: 1px solid #5a7db4;
  background: #e0e4ef;
`

const ListTable = styled.table`
  width: 100%;
  table-layout: fixed;
  border-collapse: collapse;

  th {
    height: ${({ $tall }) => ($tall ? 36 : 21)}px;
    padding: ${({ $tall }) => ($tall ? '3px 5px' : '3px 0 0 5px')};
    border-right: 1px solid #e0e0e0;
    border-bottom: ${({ $tall }) => ($tall ? `1px solid ${colors.grid}` : '0')};
    font-weight: 400;
    text-align: left;
    vertical-align: top;
    overflow: hidden;
    white-space: nowrap;
  }

  td {
    height: 16px;
    padding: 0 5px;
    border-right: 1px solid #e0e0e0;
    background: #f0f0f0;
    font-family: ${fonts.small};
    font-size: 9px;
  }

  th:last-child {
    border-right: 0;
  }
`

const MessageText = styled.span`
  display: flex;
  align-items: center;
  gap: 5px;
`

const ScrollX = styled.div`
  display: flex;
  align-items: center;
  gap: 4px;
  flex: none;
  height: 13px;
  margin: auto 1px 1px;
  padding: 0 3px;
  background: #f0f0f0;
`

const ThumbX = styled.div`
  flex: none;
  width: ${({ $width }) => $width}%;
  height: 12px;
  margin-right: auto;
  background: ${colors.thumb};
`

/* ---------- toolbox ---------- */

const ToolBoxBody = styled.div`
  flex: 251;
  border-left: 1px solid ${colors.border};
  background: #d3d3d3;
`

const Splitter = styled.div`
  display: flex;
  align-items: center;
  justify-content: center;
  gap: 6px;
  height: 4px;
  background: #e8e8e8;
`

const ItemsBox = styled.div`
  flex: 243;
  margin-right: 2px;
  border: 1px solid ${colors.dark};
  background: #fff;
`

const ZoomRow = styled.div`
  display: flex;
  align-items: center;
  flex: none;
  height: 28px;
  padding: 0 0 2px 12px;
  font-family: ${fonts.small};
  font-size: 9px;
`

const ZoomSlider = styled.input`
  appearance: none;
  width: 72px;
  height: 16px;

  &::-webkit-slider-runnable-track {
    height: 3px;
    border: 1px solid #dcdcdc;
    background: #e9e9e9;
  }

  &::-webkit-slider-thumb {
    appearance: none;
    width: 9px;
    height: 16px;
    margin-top: -8px;
    background: #0f78cf;
    clip-path: polygon(0 0, 100% 0, 100% 70%, 50% 100%, 0 70%);
  }
`

const ZoomButton = styled.button`
  display: flex;
  align-items: center;
  justify-content: center;
  width: 16px;
  height: 17px;
  margin-left: 6px;
  background: #b3b3b3;
`

const ZoomValue = styled.input`
  width: 19px;
  height: 17px;
  border: 1px solid #999;
  background: #fff;
`

const ItemCount = styled.span`
  margin-left: auto;
  margin-right: 2px;
`

/* ---------- status and task bars ---------- */

const StatusBar = styled.footer`
  display: grid;
  grid-template-columns: 108px 61px 103px 49px 171px 31px;
  justify-content: end;
  align-items: center;
  flex: none;
  height: 18px;
  font-family: ${fonts.small};
  font-size: 9px;
  white-space: nowrap;
`

const StatusItem = styled.span`
  display: flex;
  align-items: center;
  gap: 4px;
`

const TaskBar = styled.footer`
  display: flex;
  flex: none;
  height: 33px;
  background: linear-gradient(90deg, #20353a, #20353c 55%, #1a2744);
  color: #fff;
`

const StartButton = styled.button`
  display: flex;
  align-items: center;
  justify-content: center;
  width: 40px;
`

const SearchBox = styled.label`
  display: flex;
  align-items: center;
  gap: 10px;
  width: 286px;
  margin-bottom: 1px;
  padding-left: 10px;
  background: #f2f2f2;

  input {
    flex: 1;
    min-width: 0;
    font-size: 12px;
  }

  input::placeholder {
    color: #444;
    opacity: 1;
  }
`

const AppList = styled.div`
  display: grid;
  grid-template-columns: repeat(11, 1fr);
  width: 456px;
`

const AppButton = styled.button`
  display: flex;
  align-items: center;
  justify-content: center;
  background-color: ${({ $active }) => ($active ? '#4a5a63' : 'transparent')};
  background-image: ${({ $running }) => ($running ? 'linear-gradient(#86b8d6, #86b8d6)' : 'none')};
  background-position: center bottom;
  background-repeat: no-repeat;
  background-size: ${({ $active }) => ($active ? '100%' : '34px')} 2px;
`

const Tray = styled.div`
  display: flex;
  align-items: center;
  gap: 7px;
  margin-left: auto;
  padding-right: 20px;
`

const Clock = styled.time`
  margin: 0 1px 0 2px;
  text-align: center;
  line-height: 15px;
`

const Notes = styled.button`
  position: relative;
  margin-left: 3px;
`

const Badge = styled.span`
  position: absolute;
  top: 6px;
  left: 8px;
  width: 12px;
  height: 12px;
  border: 1px solid #8a8f9c;
  border-radius: 50%;
  background: #1c2234;
  font-size: 9px;
  line-height: 10px;
  text-align: center;
`

const Cursor = styled.svg`
  position: absolute;
  z-index: 5;
  top: 279px;
  left: 1082px;
  width: 8px;
  height: 14px;
`

const menu = [
  'Файл', 'Правка', 'Вид', 'Проект', 'Компиляция', 'Онлайн',
  'Отладка', 'Инструменты', 'Окно', 'Справка',
]

const toolGroups = [
  ['wand', 'newFile', 'open', 'save'],
  ['print'],
  ['undo', 'redo', 'cut', 'copy', 'paste', 'remove'],
  ['find', 'replace', 'findIn', 'replaceIn'],
  ['bookmark', 'bookmarkNext', 'bookmarkPrev', 'bookmarkClear'],
  ['windows'],
  ['gridNew', 'share'],
  ['build'],
  ['login', 'logout', 'play', 'stop', 'wrench'],
  ['stepOver', 'stepInto', 'stepOut', 'runTo', 'cycle'],
  ['arrow'],
  ['wave'],
  ['trace'],
  ['check2'],
]

const taskApps = [
  { name: 'taskView' },
  { name: 'explorer', running: true },
  { name: 'word' },
  { name: 'excel' },
  { name: 'chrome', running: true },
  { name: 'edge' },
  { name: 'store' },
  { name: 'mail' },
  { name: 'epsilon', running: true, active: true },
  { name: 'obs', running: true },
  { name: 'yellow', running: true },
]

const App = () => (
  <Page>
    <GlobalStyle />
    <TitleBar>
      <Icon name="logo" size={12} />
      <WindowTitle>Untitled3.project* - Epsilon LD</WindowTitle>
      <WindowButtons>
        <IconButton aria-label="Свернуть"><Icon name="minimize" size={10} /></IconButton>
        <IconButton aria-label="Развернуть"><Icon name="maximize" size={10} /></IconButton>
        <IconButton aria-label="Закрыть окно"><Icon name="exit" size={10} /></IconButton>
      </WindowButtons>
    </TitleBar>
    <MenuBar>
      {menu.map(item => <a key={item} href="#">{item}</a>)}
      <a href="#" aria-label="Фильтр уведомлений"><Icon name="funnel" size={13} /></a>
    </MenuBar>
    <ToolBar>
      {toolGroups.map((group, i) => (
        <React.Fragment key={i}>
          {i > 0 && <ToolSep />}
          {group.map(name => (
            <ToolButton key={name} aria-label={name} $wide={name === 'gridNew'}>
              <Icon name={name} size={13} />
              {name === 'gridNew' && <Icon name="down" size={6} />}
            </ToolButton>
          ))}
        </React.Fragment>
      ))}
    </ToolBar>
    <EmptyBar />

    <Workspace>
      <Column>
        <Panel>
          <PanelTop title="Устройства" />
          <DeviceTree />
        </Panel>
        <DockTabs>
          <DockTab href="#" $active><Icon name="devices" size={13} />Устройства</DockTab>
          <DockTab href="#"><Icon name="pages" size={13} />POU</DockTab>
        </DockTabs>
      </Column>

      <Column>
        <ModuleEditor />
        <BottomRow>
          <Panel>
            <PanelTop title="Сообщения - всего 0 ошибок, 0 предупреждений, 1 сообщений" />
            <MessageBar>
              <SelectBox $flex={267}>
                <select aria-label="Источник"><option>Devices</option></select>
                <SelectArrow><Icon name="down" size={8} /></SelectArrow>
              </SelectBox>
              <BarFill $flex={5} />
              <ErrorButton><Icon name="error" size={10} />0 ошибок</ErrorButton>
              <BarFill $flex={102} />
              <OverflowButton aria-label="Ещё"><Icon name="overflow" size={7} /></OverflowButton>
            </MessageBar>
            <ListTable>
              <colgroup>
                <col /><col width="27" /><col width="100" /><col width="101" /><col width="21" />
              </colgroup>
              <thead>
                <tr><th>Описание</th><th aria-label="Уровень" /><th>Проект</th><th>Объект</th><th>Поз</th></tr>
              </thead>
              <tbody>
                <tr>
                  <td><MessageText><Icon name="info" size={10} />Создана задача 'RegulBusTask'.</MessageText></td>
                  <td /><td /><td /><td />
                </tr>
              </tbody>
            </ListTable>
            <ScrollX>
              <Icon name="left" size={8} />
              <ThumbX $width={81} />
              <Icon name="right" size={8} />
            </ScrollX>
          </Panel>
          <Panel>
            <PanelTop title="Watch 1" />
            <ListTable $tall>
              <colgroup><col /><col width="100" /><col width="71" /></colgroup>
              <thead>
                <tr><th>Выражение</th><th>Приложение</th><th>Тип</th></tr>
              </thead>
            </ListTable>
            <ScrollX>
              <Icon name="left" size={8} />
              <ThumbX $width={41} />
              <Icon name="right" size={8} />
            </ScrollX>
          </Panel>
        </BottomRow>
      </Column>

      <Column>
        <PanelTop title="Visualization ToolBox" />
        <ToolBar>
          <ToolButton aria-label="Документ"><Icon name="docGreen" size={14} /></ToolButton>
          <ToolSep />
          <ToolButton aria-label="Добавить"><Icon name="docAdd" size={14} /></ToolButton>
          <ToolSep />
          <ToolButton aria-label="Инструмент"><Icon name="hammer" size={14} /></ToolButton>
        </ToolBar>
        <ToolBoxBody />
        <Splitter><Icon name="up" size={6} /><Icon name="down" size={6} /></Splitter>
        <ItemsBox />
        <ZoomRow>
          <ZoomSlider type="range" aria-label="Масштаб" min="0" max="100" defaultValue="15" />
          <ZoomButton aria-label="Увеличить"><Icon name="magnifier" size={12} /></ZoomButton>
          <ZoomValue aria-label="Значение масштаба" />
          <ItemCount>0 items</ItemCount>
        </ZoomRow>
        <DockTabs>
          <DockTab href="#"><Icon name="tools" size={13} />Панель инс..</DockTab>
          <DockTab href="#"><Icon name="props" size={13} />Св...</DockTab>
          <DockTab href="#" $active><Icon name="visu" size={13} />Visualizati...</DockTab>
        </DockTabs>
      </Column>
    </Workspace>

    <StatusBar>
      <StatusItem>Последняя компиляция:</StatusItem>
      <StatusItem><Icon name="error" size={9} />0 <Icon name="warn" size={9} />0</StatusItem>
      <StatusItem>Предкомпил.: <Icon name="ok" size={12} /></StatusItem>
      <StatusItem><Icon name="online" size={13} /></StatusItem>
      <StatusItem>Пользователь проекта: (никто)</StatusItem>
      <StatusItem><Icon name="shield" size={13} /></StatusItem>
    </StatusBar>

    <TaskBar>
      <StartButton aria-label="Пуск"><Icon name="start" size={15} /></StartButton>
      <SearchBox>
        <Icon name="search" size={13} />
        <input aria-label="Поиск" placeholder="Введите здесь текст для поиска" />
      </SearchBox>
      <AppList>
        {taskApps.map(({ name, running, active }) => (
          <AppButton key={name} aria-label={name} $running={running} $active={active}>
            <Icon name={name} size={18} />
          </AppButton>
        ))}
      </AppList>
      <Tray>
        <Icon name="chevron" size={12} />
        <Icon name="meet" size={13} />
        <Icon name="cloud" size={14} />
        <Icon name="mic" size={13} />
        <Icon name="battery" size={14} />
        <Icon name="wifi" size={12} />
        <Icon name="mute" size={13} />
        <span>ENG</span>
        <Clock>13:36<br />05.01.2023</Clock>
        <Notes aria-label="Уведомления">
          <Icon name="note" size={14} />
          <Badge>1</Badge>
        </Notes>
      </Tray>
    </TaskBar>
    <Cursor viewBox="0 0 8 14" aria-hidden="true">
      <path d="M1 0v11l2-2 2 4 2-1-2-4h3z" fill="#111" stroke="#fff" strokeWidth=".5" />
    </Cursor>
  </Page>
)

export default App
